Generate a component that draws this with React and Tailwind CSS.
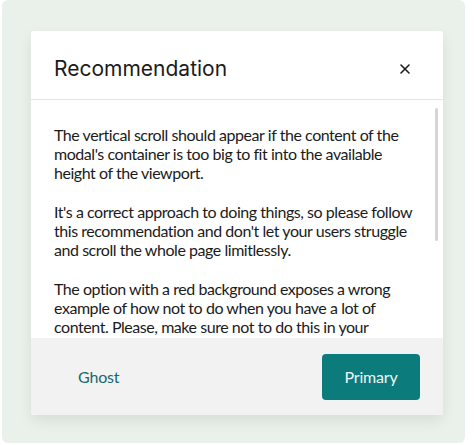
import React from 'react';

const PARAGRAPHS = [
  'The vertical scroll should appear if the content of the modal\'s container is too big to fit into the available height of the viewport.',
  'It\'s a correct approach to doing things, so please follow this recommendation and don\'t let your users struggle and scroll the whole page limitlessly.',
  'The option with a red background exposes a wrong example of how not to do when you have a lot of content. Please, make sure not to do this in your products.',
];

export default function App() {
  return (
    <div className="h-[445px] w-[474px] bg-white">
      <div className="ml-[2px] h-[443px] w-[463px] rounded-[6px] bg-[#e9f1ea] pt-[31px] pl-[29px]">
        <div className="flex h-[384px] w-[412px] flex-col overflow-hidden rounded-[3px] bg-white shadow-[0_6px_14px_rgba(0,0,0,0.08)]">
          <div className="flex h-[69px] shrink-0 items-center justify-between border-b border-[#e6e6e6] pl-[23px] pr-[32px] pt-[7px]">
            <h1 className="text-[21px] font-normal text-[#1b1b1b]" style={{ fontFamily: 'Inter, "Noto Sans", sans-serif' }}>Recommendation</h1>
            <svg width="12" height="12" viewBox="0 0 12 12" fill="none" stroke="#1b1b1b" strokeWidth="1.6" strokeLinecap="round">
              <path d="M2 2l8 8M10 2l-8 8" />
            </svg>
          </div>
          <div className="relative flex-1 overflow-hidden">
            <div className="space-y-[20px] pl-[23px] pr-[18px] pt-[25px] text-[16px] leading-[19px] tracking-[-0.45px] text-[#1b1b1b]" style={{ fontFamily: 'Lato, "Noto Sans", sans-serif' }}>
              {PARAGRAPHS.map((text) => (
                <p key={text}>{text}</p>
              ))}
            </div>
            <div className="absolute right-[5px] top-[8px] h-[133px] w-[3px] rounded-full bg-[#d5d5d5]" />
          </div>
          <div className="flex h-[77px] shrink-0 items-center justify-between bg-[#f2f2f2] pl-[47px] pr-[23px] tracking-[-0.2px]" style={{ fontFamily: 'Lato, "Noto Sans", sans-serif' }}>
            <button type="button" className="text-[16px] text-[#17696b]">Ghost</button>
            <button type="button" className="h-[46px] w-[98px] rounded-[4px] bg-[#0b7b7b] text-[16px] text-[#eef7f7]">Primary</button>
          </div>
        </div>
      </div>
    </div>
  );
}
